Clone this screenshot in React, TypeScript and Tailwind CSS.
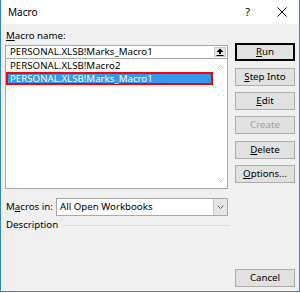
import React from "react";

const font = { fontFamily: '"Noto Sans", "Segoe UI", sans-serif' };

function Btn({ children, def, disabled, className = "" }: { children: React.ReactNode; def?: boolean; disabled?: boolean; className?: string }) {
  return (
    <div
      className={
        "h-[18px] w-[60px] flex items-center justify-center text-[9.7px] leading-none " +
        (def ? "border-2 border-black bg-[#e1e1e1] " : "border border-[#adadad] bg-[#e1e1e1] ") +
        (disabled ? "text-[#a0a0a0] " : "text-black ") +
        className
      }
    >
      {children}
    </div>
  );
}

export default function App() {
  return (
    <div className="w-[300px] h-[293px] bg-white" style={font}>
      <div className="w-[300px] h-[292px] border-l border-r border-b border-[#2b88d8] flex flex-col bg-[#f0f0f0]">
        {/* title bar */}
        <div className="h-[24px] bg-white flex items-center shrink-0">
          <span className="ml-[7px] text-[10px] text-black">Macro</span>
          <span className="ml-auto text-[11px] text-black mr-[27px]">?</span>
          <svg width="10" height="10" viewBox="0 0 10 10" className="mr-[12px]">
            <path d="M0.5 0.5 L9.5 9.5 M9.5 0.5 L0.5 9.5" stroke="#000" strokeWidth="1" />
          </svg>
        </div>
        {/* body */}
        <div className="flex flex-col pl-[4px]">
          <div className="flex">
            <div className="w-[223px] flex flex-col pt-[6px]">
              <div className="h-[12px] text-[9.7px] leading-[12px] text-black ml-[1px]">
                <span className="underline">M</span>acro name:
              </div>
              <div className="mt-[3px] h-[14px] border border-[#a9a9a9] bg-white flex items-center">
                <span className="ml-[4px] text-[9.7px] leading-none text-black">PERSONAL.XLSB!Marks_Macro1</span>
                <div className="ml-auto mr-[1px] w-[12px] h-[10px] bg-[#e5e5e5] border border-[#c8c8c8] flex items-center justify-center">
                  <svg width="8" height="8" viewBox="0 0 8 8">
                    <path d="M4 0.5 L7.5 4 L5 4 L5 6 L3 6 L3 4 L0.5 4 Z" fill="#000" />
                    <rect x="0.5" y="7" width="7" height="1" fill="#000" />
                  </svg>
                </div>
              </div>
              <div className="h-[130px] border border-t-0 border-[#a9a9a9] bg-white flex">
                <div className="flex-1 flex flex-col pt-[1px]">
                  <div className="h-[12px] text-[9.7px] leading-[12px] text-black pl-[4px]">PERSONAL.XLSB!Macro2</div>
                  <div className="h-[13px] bg-[#3399f3] border-2 border-[#ff0000] text-[9.7px] leading-[9px] text-white pl-[2px] flex items-center">
                    PERSONAL.XLSB!Marks_Macro1
                  </div>
                </div>
                <div className="w-[14px] flex flex-col items-center justify-between py-[6px]">
                  <svg width="7" height="4" viewBox="0 0 7 4">
                    <path d="M0.5 3.5 L3.5 0.5 L6.5 3.5" stroke="#c0c0c0" fill="none" />
                  </svg>
                  <svg width="7" height="4" viewBox="0 0 7 4">
                    <path d="M0.5 0.5 L3.5 3.5 L6.5 0.5" stroke="#c0c0c0" fill="none" />
                  </svg>
                </div>
              </div>
            </div>
            <div className="ml-[7px] flex flex-col pt-[19px]">
              <Btn def>
                <span className="underline">R</span>un
              </Btn>
              <Btn className="mt-[7px]">
                <span className="underline">S</span>tep Into
              </Btn>
              <Btn className="mt-[6px]">
                <span className="underline">E</span>dit
              </Btn>
              <Btn className="mt-[6px]" disabled>
                Create
              </Btn>
              <Btn className="mt-[7px]">
                <span className="underline">D</span>elete
              </Btn>
              <Btn className="mt-[6px]">
                <span className="underline">O</span>ptions...
              </Btn>
            </div>
          </div>
          <div className="mt-[9px] flex items-center h-[18px]">
            <span className="w-[50px] text-[9.7px] leading-none text-black ml-[1px]">
              M<span className="underline">a</span>cros in:
            </span>
            <div className="w-[172px] h-[18px] border border-[#a9a9a9] bg-white flex items-center">
              <span className="ml-[3px] text-[9.7px] leading-none text-black">All Open Workbooks</span>
              <div className="ml-auto w-[14px] h-full bg-[#e5e5e5] border-l border-[#c8c8c8] flex items-center justify-center">
                <svg width="7" height="4" viewBox="0 0 7 4">
                  <path d="M0.5 0.5 L3.5 3.5 L6.5 0.5" stroke="#606060" fill="none" />
                </svg>
              </div>
            </div>
          </div>
          <div className="mt-[3px] h-[12px] flex items-center">
            <span className="text-[9.7px] leading-none text-black ml-[1px]">Description</span>
            <div className="ml-[4px] w-[168px] h-px bg-[#dcdcdc]"></div>
          </div>
          <div className="mt-[38px] flex justify-end pr-[4px]">
            <Btn>Cancel</Btn>
          </div>
        </div>
      </div>
    </div>
  );
}
